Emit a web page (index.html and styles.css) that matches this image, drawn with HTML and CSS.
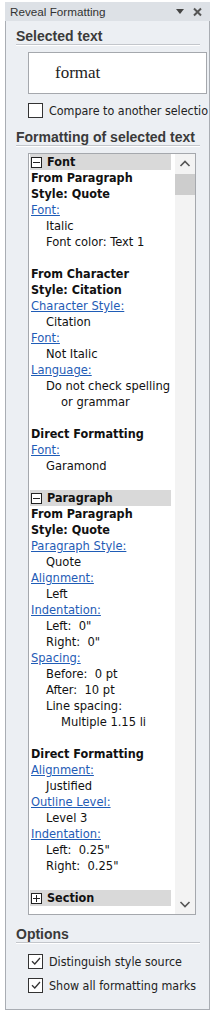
FILE: index.html
```html
<html>

<head>
    <meta charset="utf-8" />
    <link rel="stylesheet" href="styles.css">
</head>

<body>
    <div class="pane">
        <div class="titlebar">
            <span class="title">Reveal Formatting</span>
            <svg class="ctrl" width="30" height="10" viewBox="0 0 30 10">
                <path d="M2 2 L10 2 L6 7 Z" fill="#444" />
                <path d="M20 1.5 L27 8.5 M27 1.5 L20 8.5" stroke="#555" stroke-width="2" />
            </svg>
        </div>
        <div class="content">
            <div class="heading">Selected text</div>
            <div class="sample">format</div>
            <div class="check">
                <span class="box"></span>
                <span class="label">Compare to another selection</span>
            </div>

            <div class="heading second">Formatting of selected text</div>
            <div class="listbox">
                <div class="list">
                    <div class="row hdr"><span class="tog minus"></span>Font</div>
                    <div class="row src">From Paragraph</div>
                    <div class="row src">Style: Quote</div>
                    <div class="row"><a class="lnk">Font:</a></div>
                    <div class="row val">Italic</div>
                    <div class="row val">Font color: Text 1</div>
                    <div class="row"></div>
                    <div class="row src">From Character</div>
                    <div class="row src">Style: Citation</div>
                    <div class="row"><a class="lnk">Character Style:</a></div>
                    <div class="row val">Citation</div>
                    <div class="row"><a class="lnk">Font:</a></div>
                    <div class="row val">Not Italic</div>
                    <div class="row"><a class="lnk">Language:</a></div>
                    <div class="row val">Do not check spelling</div>
                    <div class="row val deep">or grammar</div>
                    <div class="row"></div>
                    <div class="row src">Direct Formatting</div>
                    <div class="row"><a class="lnk">Font:</a></div>
                    <div class="row val">Garamond</div>
                    <div class="row"></div>
                    <div class="row hdr"><span class="tog minus"></span>Paragraph</div>
                    <div class="row src">From Paragraph</div>
                    <div class="row src">Style: Quote</div>
                    <div class="row"><a class="lnk">Paragraph Style:</a></div>
                    <div class="row val">Quote</div>
                    <div class="row"><a class="lnk">Alignment:</a></div>
                    <div class="row val">Left</div>
                    <div class="row"><a class="lnk">Indentation:</a></div>
                    <div class="row val">Left:&nbsp; 0"</div>
                    <div class="row val">Right:&nbsp; 0"</div>
                    <div class="row"><a class="lnk">Spacing:</a></div>
                    <div class="row val">Before:&nbsp; 0 pt</div>
                    <div class="row val">After:&nbsp; 10 pt</div>
                    <div class="row val">Line spacing:</div>
                    <div class="row val deep">Multiple 1.15 li</div>
                    <div class="row"></div>
                    <div class="row src">Direct Formatting</div>
                    <div class="row"><a class="lnk">Alignment:</a></div>
                    <div class="row val">Justified</div>
                    <div class="row"><a class="lnk">Outline Level:</a></div>
                    <div class="row val">Level 3</div>
                    <div class="row"><a class="lnk">Indentation:</a></div>
                    <div class="row val">Left:&nbsp; 0.25"</div>
                    <div class="row val">Right:&nbsp; 0.25"</div>
                    <div class="row"></div>
                    <div class="row hdr"><span class="tog plus"></span>Section</div>
                </div>
                <div class="scrollbar">
                    <svg class="arrow" width="20" height="20" viewBox="0 0 20 20">
                        <path d="M5.5 12 L10 7.5 L14.5 12" fill="none" stroke="#555" stroke-width="1.6" />
                    </svg>
                    <div class="thumb"></div>
                    <div class="track"></div>
                    <svg class="arrow" width="20" height="20" viewBox="0 0 20 20">
                        <path d="M5.5 8 L10 12.5 L14.5 8" fill="none" stroke="#555" stroke-width="1.6" />
                    </svg>
                </div>
            </div>

            <div class="heading options">Options</div>
            <div class="check first">
                <span class="box">
                    <svg width="12" height="12" viewBox="0 0 12 12">
                        <path d="M2 6.2 L4.8 9 L10 3" fill="none" stroke="#333" stroke-width="1.3" />
                    </svg>
                </span>
                <span class="label">Distinguish style source</span>
            </div>
            <div class="check next">
                <span class="box">
                    <svg width="12" height="12" viewBox="0 0 12 12">
                        <path d="M2 6.2 L4.8 9 L10 3" fill="none" stroke="#333" stroke-width="1.3" />
                    </svg>
                </span>
                <span class="label">Show all formatting marks</span>
            </div>
        </div>
    </div>
</body>

</html>
```

FILE: styles.css
```css
* {
    box-sizing: border-box;
}

body {
    margin: 0;
    background: #fff;
    font-family: "DejaVu Sans Condensed", "DejaVu Sans", sans-serif;
    font-size: 12.8px;
    color: #111;
}

.pane {
    margin: 2px 0 0 5px;
    width: 205px;
    background: #eceff3;
    border: 1px solid #a9adb3;
    border-top: none;
}

.titlebar {
    height: 19px;
    margin: 0 -1px;
    background: #dde1e6;
    display: flex;
    align-items: center;
    justify-content: space-between;
    padding: 0 6px 0 5px;
}

.title {
    font-family: "Liberation Sans", Arial, sans-serif;
    font-size: 11.7px;
    color: #333;
}

.content {
    padding: 0 9px 15px 10px;
}

.heading {
    margin-top: 7px;
    height: 17px;
    line-height: 16px;
    font-family: "Liberation Sans", Arial, sans-serif;
    font-size: 14px;
    font-weight: bold;
    color: #3a3a3a;
    border-bottom: 1px solid #c3c6cb;
    box-shadow: 0 1px 0 #fff;
    white-space: nowrap;
}

.heading.second {
    margin-top: 10px;
}

.heading.options {
    margin-top: 11px;
}

.sample {
    margin: 7px -7px 0 12px;
    height: 42px;
    background: #fff;
    border: 1px solid #a5a8ad;
    padding-left: 26px;
    line-height: 40px;
    font-family: "Liberation Serif", Garamond, serif;
    font-size: 17px;
    color: #222;
}

.check {
    display: flex;
    align-items: center;
    height: 18px;
    margin: 7px -8px 0 12px;
    overflow: hidden;
    white-space: nowrap;
}

.check.first {
    margin-top: 9px;
}

.check.next {
    margin-top: 6px;
}

.box {
    flex: none;
    width: 15px;
    height: 15px;
    border: 1px solid #333;
    background: #fff;
    margin-right: 6px;
    display: flex;
    align-items: center;
    justify-content: center;
}

.label {
    font-size: 12.4px;
    color: #222;
}

.listbox {
    margin: 7px 0 0 12px;
    width: 168px;
    height: 762px;
    border: 1px solid #a5a8ad;
    background: #fff;
    display: flex;
    padding-left: 1px;
}

.list {
    width: 141px;
    margin-right: 4px;
    overflow: hidden;
}

.row {
    height: 16px;
    line-height: 16px;
    padding-left: 1px;
    white-space: nowrap;
}

.hdr {
    background: #d9d9d9;
    font-weight: bold;
    font-size: 12.5px;
    display: flex;
    align-items: center;
}

.src {
    font-weight: bold;
    font-size: 12.5px;
}

.lnk {
    color: #1f5cb6;
    text-decoration: underline;
}

.val {
    padding-left: 16px;
}

.val.deep {
    padding-left: 31px;
}

.tog {
    position: relative;
    width: 11px;
    height: 11px;
    border: 1px solid #222;
    margin-right: 5px;
    background: #fff;
}

.tog::before,
.tog.plus::after {
    content: "";
    position: absolute;
    background: #222;
}

.tog::before {
    left: 1px;
    right: 1px;
    top: 4px;
    height: 1px;
}

.tog.plus::after {
    top: 1px;
    bottom: 1px;
    left: 4px;
    width: 1px;
}

.scrollbar {
    width: 20px;
    background: #f3f3f3;
    display: flex;
    flex-direction: column;
}

.arrow {
    flex: none;
}

.thumb {
    height: 21px;
    background: #cdcdcd;
}

.track {
    flex: 1;
}
```
